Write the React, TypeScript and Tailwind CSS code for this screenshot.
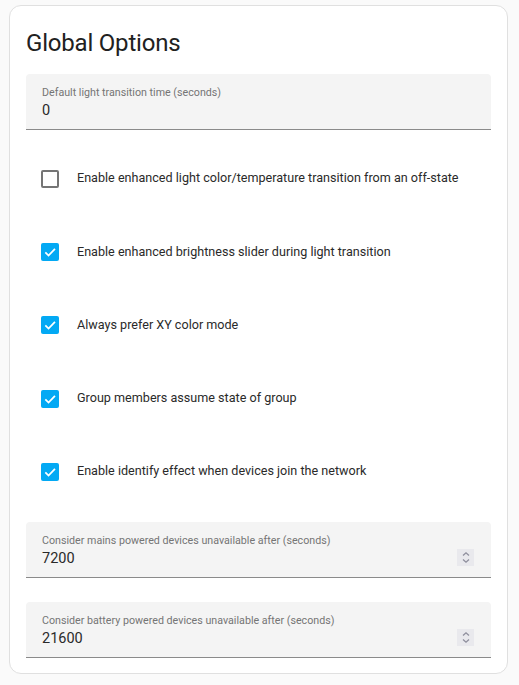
import React from "react";

const font = { fontFamily: "Roboto, 'Noto Sans', sans-serif" };

function Field({ label, value, spinner }: { label: string; value: string; spinner?: boolean }) {
  return (
    <div className="relative h-[56px] bg-[#f4f4f4] rounded-t-[4px] border-b border-[#8a8a8a] pl-[16px] pr-[17px] flex items-end">
      <div className="flex-1 flex flex-col pb-[8px]">
        <div className="text-[10.7px] leading-[14px] text-[#757575]">{label}</div>
        <div className="text-[14.5px] leading-[20px] text-[#2a2a2a] mt-[1px]">{value}</div>
      </div>
      {spinner && (
        <div className="mb-[11px] w-[17px] h-[17px] bg-[#e9e9ed] flex items-center justify-center">
          <svg width="10" height="13" viewBox="0 0 10 13" fill="none" stroke="#8f8f9d" strokeWidth="1.3">
            <path d="M2 4.5 L5 1.8 L8 4.5" />
            <path d="M2 8.5 L5 11.2 L8 8.5" />
          </svg>
        </div>
      )}
    </div>
  );
}

function Row({ checked, label }: { checked: boolean; label: string }) {
  return (
    <div className="h-[73.3px] flex items-center pl-[15px]">
      {checked ? (
        <div className="w-[18px] h-[18px] rounded-[2px] bg-[#03a9f4] flex items-center justify-center">
          <svg width="14" height="14" viewBox="0 0 24 24" fill="none" stroke="#fff" strokeWidth="3">
            <path d="M4 12.5 L9.5 18 L20.5 6.5" />
          </svg>
        </div>
      ) : (
        <div className="w-[18px] h-[18px] rounded-[2px] border-2 border-[#757575]" />
      )}
      <div className="ml-[18px] text-[12.6px] text-[#2a2a2a]">{label}</div>
    </div>
  );
}

export default function App() {
  return (
    <div className="min-h-[685px] bg-[#fafafa] pt-[5px] pl-[9px]" style={font}>
      <div className="w-[499px] bg-white border border-[#e0e0e0] rounded-[12px] px-[16px] pb-[15px]">
        <div className="pt-[13px] h-[61px] text-[24px] leading-[48px] text-[#212121] tracking-[-0.2px]">
          Global Options
        </div>
        <div className="mt-[7px]">
          <Field label="Default light transition time (seconds)" value="0" />
        </div>
        <div className="mt-[12px]">
          <Row checked={false} label="Enable enhanced light color/temperature transition from an off-state" />
          <Row checked label="Enable enhanced brightness slider during light transition" />
          <Row checked label="Always prefer XY color mode" />
          <Row checked label="Group members assume state of group" />
          <Row checked label="Enable identify effect when devices join the network" />
        </div>
        <div className="mt-[14px]">
          <Field label="Consider mains powered devices unavailable after (seconds)" value="7200" spinner />
        </div>
        <div className="mt-[24px]">
          <Field label="Consider battery powered devices unavailable after (seconds)" value="21600" spinner />
        </div>
      </div>
    </div>
  );
}
